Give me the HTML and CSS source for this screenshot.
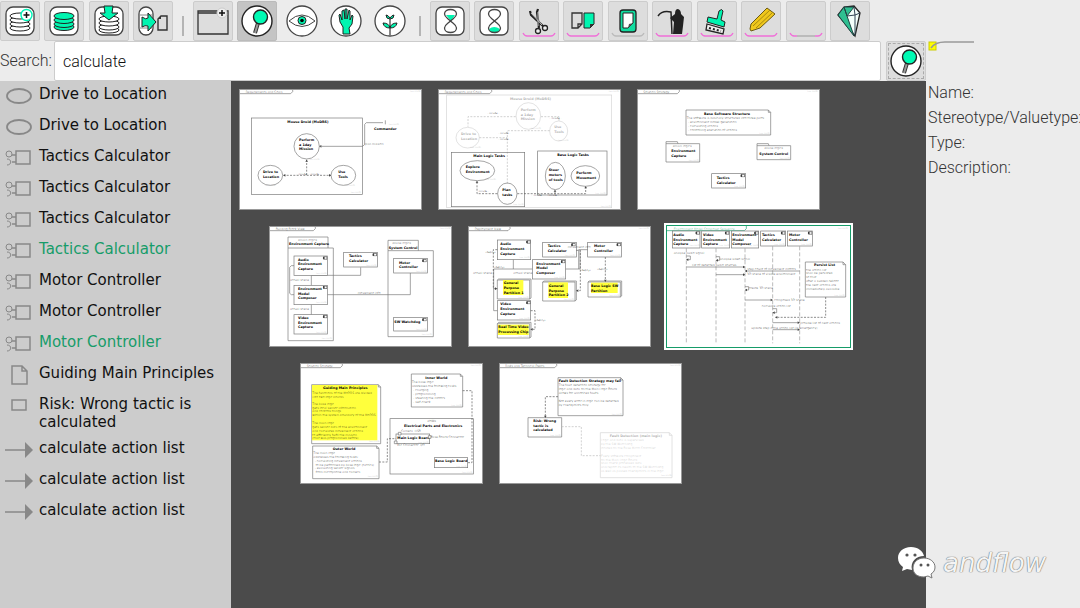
FILE: index.html
```
<!DOCTYPE html>
<html lang="en">
<head>
    <meta charset="UTF-8">
    <meta name="viewport" content="width=device-width, initial-scale=1.0">
    <title>Model Search</title>
    <link rel="stylesheet" href="styles.css">
</head>
<body>
    <!-- shared shapes -->
    <svg class="defs" aria-hidden="true">
        <symbol id="magnifier" viewBox="0 0 40 40">
            <circle cx="20" cy="20" r="15" fill="#fff" stroke="#222" stroke-width="1.4"/>
            <path d="M21 22L18 32" stroke="#333" stroke-width="4"/>
            <path d="M21 22L18 32" stroke="#999" stroke-width="2"/>
            <circle cx="23.500" cy="16" r="7" fill="#00fab4" stroke="#222" stroke-width="1.4"/>
        </symbol>
        <symbol id="component" viewBox="0 0 31 20">
            <path d="M14 3h14v13H14zM14 7h-4M14 14h-4" fill="none" stroke="#888" stroke-width="1.5"/>
            <circle cx="7" cy="6" r="3" fill="none" stroke="#888"/>
            <path d="M5 11c5 0 5 6 0 6" fill="none" stroke="#888"/>
        </symbol>
        <symbol id="usecase" viewBox="0 0 31 20">
            <ellipse cx="17" cy="10" rx="12" ry="7" fill="none" stroke="#888" stroke-width="1.8"/>
        </symbol>
        <symbol id="arrow" viewBox="0 0 31 20">
            <path d="M3 10h21" stroke="#888" stroke-width="1.5"/>
            <path d="M23 2l8 8-8 8z" fill="#888"/>
        </symbol>
        <symbol id="comp" viewBox="0 0 14 10">
            <path d="M3 1h10v8H3zM1 3h4v1H1zM1 6h4v1H1z" fill="#fff" stroke="#333"/>
        </symbol>
        <symbol id="underline" viewBox="0 0 40 40">
            <path d="M4 32c1 2 2 3 4 3h24c2 0 3-1 4-3" fill="none" stroke="currentColor" stroke-width="1.3"/>
        </symbol>
    </svg>

    <header class="toolbar">
        <div class="group group-data">
            <button class="tool" aria-label="New database">
                <svg viewBox="0 0 40 40"><rect class="tile" x="6" y="6" width="28" height="28" rx="7"/>
                    <g class="disc"><ellipse cx="20" cy="27" rx="10" ry="3"/><ellipse cx="20" cy="23" rx="10" ry="3"/><ellipse cx="20" cy="19" rx="10" ry="3"/><ellipse cx="20" cy="15" rx="10" ry="3"/></g>
                    <circle cx="26.500" cy="14" r="5.500" fill="#fff" stroke="#00f5b8" stroke-width="1.4"/><path class="plus" d="M23.500 14h6M26.500 11v6"/></svg>
            </button>
            <button class="tool" aria-label="Open database">
                <svg viewBox="0 0 40 40"><rect class="tile" x="6" y="6" width="28" height="28" rx="7"/>
                    <g class="disc green"><ellipse cx="20" cy="26" rx="10" ry="3.500"/><ellipse cx="20" cy="23" rx="10" ry="3.500"/><ellipse cx="20" cy="19" rx="10" ry="3.500"/><ellipse cx="20" cy="15" rx="10" ry="3.500"/></g></svg>
            </button>
            <button class="tool" aria-label="Save to database">
                <svg viewBox="0 0 40 40"><rect class="tile" x="6" y="6" width="28" height="28" rx="7"/>
                    <g class="disc"><ellipse cx="20" cy="29" rx="10" ry="3"/><ellipse cx="20" cy="26" rx="10" ry="3"/><ellipse cx="20" cy="22" rx="10" ry="3"/><ellipse cx="20" cy="18" rx="10" ry="3"/></g>
                    <path class="green" d="M15 5h9l-1 7h6l-9 7-9-7h5z"/></svg>
            </button>
            <button class="tool" aria-label="Export to file">
                <svg viewBox="0 0 40 40"><rect class="tile" x="6" y="6" width="14" height="28" rx="7"/>
                    <path d="M6 14h14M6 27h14" stroke="#888"/>
                    <path class="green" d="M9 16q4 3 6 1v-5l8 9-8 9v-5q-3-1-6 1z"/>
                    <path d="M28 15h6v14h-9V18z" fill="#ddd" stroke="#333" stroke-width="1.400"/><path d="M25 18l3-3v3z" fill="#333"/></svg>
            </button>
        </div>
        <span class="separator"></span>
        <div class="group group-view">
            <button class="tool" aria-label="New diagram">
                <svg viewBox="0 0 40 40"><path d="M5 10h30v23H5zM5 12h30" fill="none" stroke="#333" stroke-width="1.300"/><circle cx="29" cy="12" r="5" fill="#eee" stroke="#ccc"/><path class="plus" d="M26 12h6M29 9v6"/></svg>
            </button>
            <button class="tool active" aria-label="Find"><svg><use href="#magnifier"/></svg></button>
            <button class="tool flat" aria-label="Show">
                <svg viewBox="0 0 40 40"><circle class="round" cx="20" cy="20" r="15"/><path d="M7 20q13-12 26 0-13 11-26 0z" fill="#fff" stroke="#444"/><circle class="green" cx="20" cy="19.500" r="4"/><circle cx="20" cy="19.500" r="1.800"/></svg>
            </button>
            <button class="tool flat" aria-label="Move">
                <svg viewBox="0 0 40 40"><circle class="round" cx="20" cy="20" r="15"/><path class="green" d="M17 33v-7l-3-5-1-7 1-1 2 6v-9l2-1 1 9V8h2v10l2-9 1 1v9l2-5 1 1-1 8-3 4 1 6z"/></svg>
            </button>
            <button class="tool flat" aria-label="Grow">
                <svg viewBox="0 0 40 40"><circle class="round" cx="20" cy="20" r="15"/><path d="M20 18v16" stroke="#444" stroke-width="1.300"/><path class="green" d="M20 27q-6 0-7-5 6 0 7 5zM20 27q6 0 7-5-6 0-7 5zM20 18q-4 0-4-4 2 0 4 3 2-3 4-3 0 4-4 4z"/></svg>
            </button>
        </div>
        <span class="separator"></span>
        <div class="group group-edit">
            <button class="tool" aria-label="Undo">
                <svg viewBox="0 0 40 40"><rect class="tile" x="6" y="6" width="28" height="28" rx="6"/><path d="M16 14h9l-4 6z" fill="#00f5b0"/><path class="glass" d="M20.500 20c-3-3-6-4-6-7 0-6 12-6 12 0 0 3-3 4-6 7zM20.500 20c-3 3-6 4-6 7 0 6 12 6 12 0 0-3-3-4-6-7z"/></svg>
            </button>
            <button class="tool" aria-label="Redo">
                <svg viewBox="0 0 40 40"><rect class="tile" x="6" y="6" width="28" height="28" rx="6"/><path d="M15 28q5-4 11 0-2 5-6 4-4 0-5-4z" fill="#00f5b0"/><path class="glass" d="M20.500 20c-3-3-6-4-6-7 0-6 12-6 12 0 0 3-3 4-6 7zM20.500 20c-3 3-6 4-6 7 0 6 12 6 12 0 0-3-3-4-6-7z"/></svg>
            </button>
            <button class="tool" aria-label="Cut">
                <svg viewBox="0 0 40 40"><use class="pink" href="#underline"/><path d="M11 10l1 4 12 11M19 8l-1 3 2 16" fill="none" stroke="#222" stroke-width="2.200"/><path d="M12 12l11 12M19 11v14" stroke="#bbb"/><circle class="ring" cx="19" cy="30" r="2.500"/><circle class="ring" cx="26" cy="27" r="2.500"/></svg>
            </button>
            <button class="tool" aria-label="Copy">
                <svg viewBox="0 0 40 40"><use class="pink" href="#underline"/><path d="M9 12h10v11l-4 4H9zM15 27v-4h4" fill="#ddd" stroke="#333" stroke-width="1.300"/><path class="green" d="M21 12h10v11l-4 4h-6z"/><path d="M27 27v-4h4z" fill="#333"/></svg>
            </button>
            <button class="tool" aria-label="Paste">
                <svg viewBox="0 0 40 40"><use class="gray" href="#underline"/><rect x="12" y="9" width="16" height="22" rx="3" fill="#12dda0" stroke="#222" stroke-width="1.300"/><path d="M15 12h10v10l-5 5h-5z" fill="#fff" stroke="#222"/><path d="M20 27l1-4 4-1z" fill="#555"/></svg>
            </button>
            <button class="tool" aria-label="Delete">
                <svg viewBox="0 0 40 40"><use class="pink" href="#underline"/><path d="M6 15q4-6 13-4l1 22" fill="none" stroke="#222" stroke-width="1.500"/><path d="M18 17l5-4q0-5 3-5 3 1 3 5l3 3-1 9-1 8H21l1-12z" fill="#222"/></svg>
            </button>
            <button class="tool" aria-label="Format">
                <svg viewBox="0 0 40 40"><use class="pink" href="#underline"/><path class="green" d="M11 16l9 2 2-8q3-3 4 0l-2 9 4 2-1 5-17-5z"/><path d="M10 23l17 5-1 5-17-4z" fill="#eee" stroke="#222" stroke-width="1.300"/><path d="M12 27l12 3" stroke="#222" stroke-width="2" stroke-dasharray="2 2"/></svg>
            </button>
            <button class="tool" aria-label="Highlight">
                <svg viewBox="0 0 40 40"><use class="pink" href="#underline"/><path d="M10 23L26 7l8 6-15 14-6 2-3 1-1-2z" fill="#f0c71c" stroke="#6b5a14"/><path d="M12 25L29 9M15 27L32 11" stroke="#a68a10"/></svg>
            </button>
            <button class="tool" aria-label="Clear highlight"><svg viewBox="0 0 40 40"><use class="pink" href="#underline"/><path d="M11 35h18" stroke="#bbb" stroke-width="2"/></svg></button>
            <button class="tool" aria-label="Refine">
                <svg viewBox="0 0 40 40"><path d="M8 14l6-8 10-1 6 7-5 23z" fill="#f4fffb" stroke="#222" stroke-width="1.300"/><path d="M8 14l6-8 3 9 7 20zM14 6l10 0-7 9z" fill="#2fbf91" stroke="#244"/><path d="M17 15l8-1 5-2M25 14v20M24 6l1 8" fill="none" stroke="#345"/></svg>
            </button>
        </div>
    </header>

    <div class="workspace">
        <main class="main">
            <form class="search">
                <label for="query">Search:</label>
                <input id="query" type="text" value="calculate">
                <button class="tool" type="button" aria-label="Search"><svg><use href="#magnifier"/></svg></button>
            </form>

            <div class="content">
                <ul class="results">
                    <li><svg><use href="#usecase"/></svg><a href="#d1">Drive to Location</a></li>
                    <li><svg><use href="#usecase"/></svg><a href="#d2">Drive to Location</a></li>
                    <li><svg><use href="#component"/></svg><a href="#d3">Tactics Calculator</a></li>
                    <li><svg><use href="#component"/></svg><a href="#d4">Tactics Calculator</a></li>
                    <li><svg><use href="#component"/></svg><a href="#d5">Tactics Calculator</a></li>
                    <li><svg><use href="#component"/></svg><a class="current" href="#d6">Tactics Calculator</a></li>
                    <li><svg><use href="#component"/></svg><a href="#d4">Motor Controller</a></li>
                    <li><svg><use href="#component"/></svg><a href="#d5">Motor Controller</a></li>
                    <li><svg><use href="#component"/></svg><a class="current" href="#d6">Motor Controller</a></li>
                    <li><svg viewBox="0 0 31 20"><path d="M10 1h10l5 5v13H10zM20 1v5h5" fill="none" stroke="#888" stroke-width="1.500"/></svg><a href="#d7">Guiding Main Principles</a></li>
                    <li><svg viewBox="0 0 31 20"><path d="M10 4h14v10H10z" fill="none" stroke="#888" stroke-width="1.500"/></svg><a href="#d8">Risk: Wrong tactic is calculated</a></li>
                    <li><svg><use href="#arrow"/></svg><a href="#d6">calculate action list</a></li>
                    <li><svg><use href="#arrow"/></svg><a href="#d6">calculate action list</a></li>
                    <li><svg><use href="#arrow"/></svg><a href="#d6">calculate action list</a></li>
                </ul>

                <!-- diagram overview, three drawing units to a pixel -->
                <div class="canvas">
                    <div class="row">
                        <svg class="diagram" id="d1" viewBox="15 14 549 363">
                            <path class="tab" d="M15 28h155l6-6v-8"/><text class="title" x="35" y="25">Requirements and Goals</text>
                            <rect x="52" y="101" width="333" height="229"/>
                            <text class="name" x="160" y="115">Mouse Droid (MoDRS)</text>
                            <circle cx="218" cy="186" r="38"/>
                            <text class="name"><tspan x="195" y="170">Perform</tspan><tspan x="195" dy="14">a 1day</tspan><tspan x="195" dy="14">Mission</tspan></text>
                            <ellipse cx="109" cy="273" rx="37" ry="30"/>
                            <text class="name"><tspan x="87" y="266">Drive to</tspan><tspan x="87" dy="14">Location</tspan></text>
                            <ellipse cx="328" cy="273" rx="37" ry="30"/>
                            <text class="name"><tspan x="313" y="266">Use</tspan><tspan x="313" dy="14">Tools</tspan></text>
                            <path class="dash" d="M218 226v47M148 273h143"/><path class="head" d="M148 273l6-4v8zM291 273l-6-4v8zM256 186l6-4v8zM218 226l-4 6h8z"/>
                            <text class="tiny" x="187" y="271">&lt;include&gt;&lt;include&gt;</text>
                            <path d="M256 186h130l6-6v-60l5-5h50"/><path d="M454 108v12"/>
                            <text class="name" x="420" y="136">Commander</text><text class="note" x="392" y="182">plan mission</text>
                            <g class="rev"><text x="528" y="22">(rev 0003)</text><text x="464" y="121">(rev 0003)</text><text x="225" y="226">(rev 0003)</text><text x="93" y="304">(rev 0003)</text><text x="332" y="304">(rev 0003)</text><text x="350" y="327">(rev 0003)</text></g>
                        </svg>
                        <svg class="diagram" id="d2" viewBox="18 14 549 363">
                            <path class="tab" d="M18 28h155l6-6v-8"/><text class="title" x="38" y="25">Requirements and Goals</text>
                            <g class="faded">
                                <rect x="44" y="32" width="495" height="338"/>
                                <text class="name" x="234" y="46">Mouse Droid (MoDRS)</text>
                                <ellipse cx="289" cy="95" rx="37" ry="40"/>
                                <text class="name"><tspan x="266" y="80">Perform</tspan><tspan x="266" dy="14">a 1day</tspan><tspan x="266" dy="14">Mission</tspan></text>
                                <ellipse cx="107" cy="160" rx="35" ry="31"/>
                                <text class="name"><tspan x="87" y="152">Drive to</tspan><tspan x="87" dy="14">Location</tspan></text>
                                <ellipse cx="380" cy="140" rx="27" ry="30"/>
                                <text class="name"><tspan x="367" y="132">Use</tspan><tspan x="367" dy="14">Tools</tspan></text>
                            </g>
                            <path class="dash light" d="M251 97H108v30M327 97h54v12M353 139H226v160M142 160h84"/>
                            <rect x="58" y="204" width="220" height="163"/><text class="name" x="124" y="217">Main Logic Tasks</text>
                            <rect x="317" y="200" width="208" height="132"/><text class="name" x="376" y="214">Base Logic Tasks</text>
                            <ellipse cx="136" cy="259" rx="52" ry="30"/>
                            <text class="name"><tspan x="101" y="251">Explore</tspan><tspan x="101" dy="14">Environment</tspan></text>
                            <ellipse cx="226" cy="328" rx="29" ry="32"/>
                            <text class="name"><tspan x="211" y="321">Plan</tspan><tspan x="211" dy="14">tasks</tspan></text>
                            <ellipse cx="370" cy="275" rx="30" ry="41"/>
                            <text class="name"><tspan x="350" y="261">Steer</tspan><tspan x="350" dy="14">motors</tspan><tspan x="350" dy="14">of tools</tspan></text>
                            <ellipse cx="460" cy="275" rx="43" ry="31"/>
                            <text class="name"><tspan x="433" y="269">Perform</tspan><tspan x="433" dy="14">Movement</tspan></text>
                            <path class="dash" d="M196 328h-61v-38M256 328h205v-22M369 328v-10"/><path class="head" d="M135 289l-4 6h8zM461 306l-4 6h8zM369 316l-4 6h8z"/>
                            <g class="tiny"><text x="134" y="324">&lt;include&gt;</text><text x="298" y="336">&lt;include&gt;</text><text x="344" y="336">&lt;include&gt;</text><text x="198" y="148">&lt;include&gt;</text><text x="198" y="168">&lt;include&gt;</text><text x="165" y="90">&lt;include&gt;</text><text x="352" y="104">&lt;include&gt;</text></g>
                            <g class="rev"><text x="530" y="22">(rev 0003)</text><text x="115" y="190">(rev 0003)</text><text x="296" y="135">(rev 0003)</text><text x="378" y="169">(rev 0003)</text><text x="160" y="288">(rev 0003)</text><text x="244" y="361">(rev 0003)</text><text x="490" y="329">(rev 0003)</text><text x="506" y="367">(rev 0003)</text></g>
                        </svg>
                        <svg class="diagram" id="d3" viewBox="20 14 549 363">
                            <path class="tab" d="M20 28h121l6-6v-8"/><text class="title" x="39" y="25">Solution Strategy</text>
                            <path d="M167 77h247l7 7v68H167zM414 77v7h7"/>
                            <text class="name" x="221" y="92">Base Software Structure</text>
                            <text class="note"><tspan x="169" y="104">The software is basically structured into three parts:</tspan><tspan x="173" dy="12">- environment model generation</tspan><tspan x="173" dy="11">- calculating actions</tspan><tspan x="173" dy="12">- controlling execution of actions</tspan></text>
                            <path d="M107 178v-6h34l2 6M107 178h101v55H107zM380 184v-6h34l2 6M380 184h101v42H380z"/>
                            <text class="stereo" x="127" y="188">«main logic»</text><text class="name"><tspan x="123" y="203">Environment</tspan><tspan x="123" dy="14">Capture</tspan></text>
                            <text class="stereo" x="402" y="195">«base logic»</text><text class="name" x="387" y="211">System Control</text>
                            <rect x="244" y="268" width="102" height="43"/><use href="#comp" x="330" y="269" width="14" height="10"/>
                            <text class="name"><tspan x="259" y="284">Tactics</tspan><tspan x="259" dy="14">Calculator</tspan></text>
                            <g class="rev"><text x="531" y="22">(rev 0003)</text><text x="387" y="148">(rev 0003)</text><text x="175" y="229">(rev 0003)</text><text x="448" y="223">(rev 0003)</text><text x="312" y="307">(rev 0003)</text></g>
                        </svg>
                    </div>

                    <div class="row indent">
                        <svg class="diagram" id="d4" viewBox="15 17 549 363">
                            <path class="tab" d="M15 31h133l6-6v-8"/><text class="title" x="35" y="29">Building Block View</text>
                            <path d="M72 83V50h120v33M72 83h136v278H72zM372 91V60h91v31M372 91h136v258H372z"/>
                            <text class="stereo" x="102" y="61">«main logic»</text><text class="name" x="75" y="75">Environment Capture</text>
                            <text class="stereo" x="385" y="72">«base logic»</text><text class="name" x="374" y="87">System Control</text>
                            <path d="M90 136h-8l-5 5v78l5 4h8M142 165v30M142 165h148v-24M142 253v30M190 223h249v-65"/>
                            <g class="node"><rect x="90" y="107" width="100" height="58"/><rect x="90" y="195" width="100" height="58"/><rect x="90" y="283" width="100" height="58"/><rect x="239" y="97" width="101" height="43"/><rect x="389" y="114" width="101" height="44"/><rect x="389" y="291" width="101" height="41"/></g>
                            <text class="name"><tspan x="102" y="121">Audio</tspan><tspan x="102" dy="14">Environment</tspan><tspan x="102" dy="14">Capture</tspan></text>
                            <text class="name"><tspan x="102" y="209">Environment</tspan><tspan x="102" dy="14">Model</tspan><tspan x="102" dy="14">Composer</tspan></text>
                            <text class="name"><tspan x="102" y="296">Video</tspan><tspan x="102" dy="14">Environment</tspan><tspan x="102" dy="14">Capture</tspan></text>
                            <text class="name"><tspan x="255" y="111">Tactics</tspan><tspan x="255" dy="14">Calculator</tspan></text>
                            <text class="name"><tspan x="405" y="130">Motor</tspan><tspan x="405" dy="14">Controller</tspan></text>
                            <text class="name" x="391" y="307">SW Watchdog</text>
                            <use href="#comp" x="176" y="108" width="14" height="10"/><use href="#comp" x="176" y="196" width="14" height="10"/><use href="#comp" x="176" y="284" width="14" height="10"/><use href="#comp" x="325" y="98" width="14" height="10"/><use href="#comp" x="474" y="116" width="14" height="10"/><use href="#comp" x="474" y="293" width="14" height="10"/>
                            <text class="note" x="78" y="183">actual scene</text><text class="note" x="78" y="270">actual scene</text><text class="note" x="281" y="220">movement info</text>
                            <g class="rev"><text x="528" y="25">(rev 0003)</text><text x="156" y="161">(rev 0003)</text><text x="156" y="249">(rev 0003)</text><text x="156" y="337">(rev 0003)</text><text x="173" y="357">(rev 0003)</text><text x="306" y="136">(rev 0003)</text><text x="456" y="154">(rev 0003)</text><text x="456" y="328">(rev 0003)</text><text x="473" y="345">(rev 0003)</text></g>
                        </svg>
                        <svg class="diagram" id="d5" viewBox="18 17 549 363">
                            <path class="tab" d="M18 31h120l6-6v-8"/><text class="title" x="38" y="29">Deployment View</text>
                            <g class="node"><rect x="106" y="59" width="100" height="59"/><rect x="242" y="67" width="101" height="43"/><rect x="377" y="67" width="101" height="43"/><rect x="106" y="241" width="100" height="58"/></g>
                            <path d="M154 118v28M95 146h260M95 146v125h11M350 146V88h27M354 146V90"/>
                            <g class="node"><rect x="211" y="118" width="100" height="58"/>
                                <path d="M106 179l4-3h97v57l-4 3h-97zM106 179h97v57M242 185l4-3h97v57l-4 3h-97zM242 185h97v57M378 185l4-3h97v45l-4 3h-97zM378 185h97v45M106 310l4-4h97v44l-4 3h-97zM106 310h97v43"/></g>
                            <g class="mark"><rect x="123" y="179" width="61" height="45"/><rect x="259" y="186" width="59" height="47"/><rect x="387" y="187" width="80" height="31"/><rect x="108" y="313" width="92" height="31"/></g>
                            <text class="name"><tspan x="115" y="75">Audio</tspan><tspan x="115" dy="14">Environment</tspan><tspan x="115" dy="14">Capture</tspan></text>
                            <text class="name"><tspan x="257" y="81">Tactics</tspan><tspan x="257" dy="14">Calculator</tspan></text>
                            <text class="name"><tspan x="396" y="81">Motor</tspan><tspan x="396" dy="14">Controller</tspan></text>
                            <text class="name"><tspan x="223" y="133">Environment</tspan><tspan x="223" dy="14">Model</tspan><tspan x="223" dy="14">Composer</tspan></text>
                            <text class="name"><tspan x="125" y="191">General</tspan><tspan x="125" dy="14">Purpose</tspan><tspan x="125" dy="15">Partition 1</tspan></text>
                            <text class="name"><tspan x="260" y="199">General</tspan><tspan x="260" dy="15">Purpose</tspan><tspan x="260" dy="14">Partition 2</tspan></text>
                            <text class="name"><tspan x="387" y="199">Base Logic SW</tspan><tspan x="387" dy="15">Partition</tspan></text>
                            <text class="name"><tspan x="115" y="255">Video</tspan><tspan x="115" dy="14">Environment</tspan><tspan x="115" dy="15">Capture</tspan></text>
                            <text class="name"><tspan x="109" y="324">Real Time Video</tspan><tspan x="109" dy="15">Processing Chip</tspan></text>
                            <path class="dash" d="M106 88H94v117h12M343 90h12v121h-12M430 110v74M206 271h13v56h-13"/><path class="head" d="M106 205l-7-4v8zM343 211l6-4v8zM430 184l-4-6h8zM206 327l6-4v8z"/>
                            <use href="#comp" x="192" y="60" width="14" height="10"/><use href="#comp" x="327" y="68" width="14" height="10"/><use href="#comp" x="463" y="68" width="14" height="10"/><use href="#comp" x="296" y="119" width="14" height="10"/><use href="#comp" x="192" y="242" width="14" height="10"/>
                            <text class="note" x="33" y="160">actual scene</text><text class="note" x="154" y="160">actual scene</text><text class="note" x="317" y="82">movement info</text>
                            <g class="tiny"><text x="70" y="97">«deploy»</text><text x="96" y="142">«deploy»</text><text x="355" y="151">«deploy»</text><text x="405" y="149">«deploy»</text><text x="219" y="301">«deploy»</text></g>
                            <g class="rev"><text x="530" y="25">(rev 0003)</text><text x="172" y="114">(rev 0003)</text><text x="308" y="106">(rev 0003)</text><text x="444" y="106">(rev 0003)</text><text x="277" y="172">(rev 0003)</text><text x="169" y="232">(rev 0003)</text><text x="305" y="239">(rev 0003)</text><text x="441" y="227">(rev 0003)</text><text x="172" y="295">(rev 0003)</text><text x="169" y="350">(rev 0003)</text></g>
                        </svg>
                        <svg class="diagram selected" id="d6" viewBox="18 17 549 363">
                            <path class="tab teal" d="M18 31h232l6-6v-8"/><text class="title teal" x="38" y="29">Environment Model Composer Sequence</text>
                            <path class="life" d="M76 84v285M165 84v285M252 84v285M335 78v291M416 78v291"/>
                            <g class="node"><rect x="34" y="32" width="83" height="51"/><rect x="122" y="32" width="84" height="51"/><rect x="211" y="32" width="82" height="51"/><rect x="299" y="32" width="75" height="45"/><rect x="379" y="32" width="75" height="45"/></g>
                            <text class="name"><tspan x="37" y="47">Audio</tspan><tspan x="37" dy="14">Environment</tspan><tspan x="37" dy="14">Capture</tspan></text>
                            <text class="name"><tspan x="126" y="47">Video</tspan><tspan x="126" dy="14">Environment</tspan><tspan x="126" dy="14">Capture</tspan></text>
                            <text class="name"><tspan x="214" y="47">Environment</tspan><tspan x="214" dy="14">Model</tspan><tspan x="214" dy="14">Composer</tspan></text>
                            <text class="name"><tspan x="303" y="47">Tactics</tspan><tspan x="303" dy="14">Calculator</tspan></text>
                            <text class="name"><tspan x="384" y="47">Motor</tspan><tspan x="384" dy="14">Controller</tspan></text>
                            <use href="#comp" x="103" y="33" width="14" height="10"/><use href="#comp" x="191" y="33" width="14" height="10"/><use href="#comp" x="279" y="33" width="14" height="10"/><use href="#comp" x="359" y="33" width="14" height="10"/><use href="#comp" x="440" y="33" width="14" height="10"/>
                            <path d="M76 140h176M252 152h164M165 163h87M252 239h83M335 307h81M335 328h81M76 107h12v11H76M165 109h11v11h-11M252 199h11v10h-11M335 265h12v12h-12"/>
                            <path class="head" d="M252 140l-6-4v8zM252 152l6-4v8zM252 163l-6-4v8zM335 239l-6-4v8zM416 307l-6-4v8zM416 328l-6-4v8zM76 118l6-4v8zM165 120l6-4v8zM252 209l6-4v8zM335 277l6-4v8z"/>
                            <g class="note"><text x="38" y="102">analyse audio signal</text><text x="176" y="119">analyse video signal</text><text x="93" y="137">list of detected audio sources</text><text x="259" y="148">step count of movement motors</text><text x="258" y="165">3D scene of visible environment</text><text x="263" y="206">create 3D scene</text><text x="340" y="243">composed 3D scene</text><text x="302" y="261">calculate action list</text><text x="418" y="312">provide list of next actions</text><text x="271" y="325">update step if the action list (in emergency)</text></g>
                            <path class="node" d="M433 125h113l8 8v97H433zM546 125v8h8"/><path class="dash" d="M494 230v61H343"/><path class="head" d="M343 291l6-4v8z"/>
                            <text class="name" x="459" y="138">Persist List</text>
                            <text class="note"><tspan x="435" y="151">the action list</tspan><tspan x="435" dy="11">shall be persisted,</tspan><tspan x="435" dy="11">so that</tspan><tspan x="435" dy="11">after a sudden reboot</tspan><tspan x="435" dy="12">the next actions are</tspan><tspan x="435" dy="12">immediately available.</tspan></text>
                            <g class="rev"><text x="530" y="25">(rev 0003)</text><text x="86" y="76">(rev 0003)</text><text x="175" y="76">(rev 0003)</text><text x="262" y="76">(rev 0003)</text><text x="340" y="73">(rev 0003)</text><text x="421" y="73">(rev 0003)</text><text x="520" y="226">(rev 0003)</text></g>
                        </svg>
                    </div>

                    <div class="row indent-more">
                        <svg class="diagram" id="d7" viewBox="18 14 549 363">
                            <path class="tab" d="M18 28h121l6-6v-8"/><text class="title" x="38" y="25">Solution Strategy</text>
                            <path class="node" d="M53 79h200l7 7v170H53zM253 79v7h7"/><rect class="mark" x="54" y="80" width="196" height="166"/>
                            <text class="name" x="87" y="92">Guiding Main Principles</text>
                            <text class="note"><tspan x="55" y="107">The functions of the MoDRS are divided</tspan><tspan x="55" dy="12">into two logic boards.</tspan><tspan x="55" dy="20">The base logic</tspan><tspan x="55" dy="12">gets local sensor information</tspan><tspan x="55" dy="11">and controls things</tspan><tspan x="55" dy="12">within the system boundary of the MoDRS.</tspan><tspan x="55" dy="22">The main logic</tspan><tspan x="55" dy="12">gets sensor data of the environment</tspan><tspan x="55" dy="12">and calculates movement actions</tspan><tspan x="55" dy="12">to efficiently fulfil the mission</tspan><tspan x="55" dy="11">(that was programmed before).</tspan></text>
                            <path d="M352 47h147l7 7v92H352zM499 47v7h7M56 263h192l7 7v91H56zM248 263v7h7"/>
                            <text class="name" x="394" y="63">Inner World</text>
                            <text class="note"><tspan x="354" y="75">The base logic</tspan><tspan x="354" dy="12">addresses the following tasks:</tspan><tspan x="358" dy="11">- charging</tspan><tspan x="358" dy="12">- programming</tspan><tspan x="358" dy="11">- steering the motors</tspan><tspan x="358" dy="12">- self-check</tspan></text>
                            <text class="name" x="116" y="275">Outer World</text>
                            <text class="note"><tspan x="58" y="287">The main logic</tspan><tspan x="58" dy="12">addresses the following tasks:</tspan><tspan x="62" dy="11">- calculating movement actions</tspan><tspan x="65" dy="12">to be performed by base logic (tactics)</tspan><tspan x="62" dy="11">- evaluating sensor signals</tspan><tspan x="65" dy="12">from microphone and camera</tspan></text>
                            <rect x="288" y="181" width="250" height="166"/><text class="stereo" x="400" y="191">«HW»</text><text class="name" x="330" y="206">Electrical Parts and Electronics</text>
                            <rect x="306" y="227" width="101" height="29"/><text class="name" x="310" y="243">Main Logic Board</text>
                            <rect x="421" y="298" width="100" height="30"/><text class="name" x="423" y="312">Base Logic Board</text>
                            <path class="node" d="M313 222h8v8h-8zM301 248h8v8h-8zM403 232h8v8h-8z"/>
                            <g class="note"><text x="321" y="222">Camera :USB</text><text x="410" y="240">Base Board Connector</text><text x="309" y="263">Mic Connector :I/O</text></g>
                            <path class="dash" d="M255 311h25v-70h26M506 97h28v216h-13"/>
                            <g class="rev"><text x="530" y="22">(rev 0003)</text><text x="225" y="252">(rev 0003)</text><text x="472" y="142">(rev 0003)</text><text x="221" y="357">(rev 0003)</text><text x="373" y="254">(rev 0003)</text><text x="487" y="325">(rev 0003)</text><text x="504" y="344">(rev 0003)</text></g>
                        </svg>
                        <svg class="diagram" id="d8" viewBox="614 14 549 363">
                            <path class="tab" d="M614 28h167l6-6v-8"/><text class="title" x="633" y="25">Risks and Technical Debts</text>
                            <path d="M791 58h188l7 7v107H791zM979 58v7h7M701 178h101v58H701z"/>
                            <text class="name" x="793" y="72">Fault Detection Strategy may fail</text>
                            <text class="note"><tspan x="793" y="84">The fault detection strategy for</tspan><tspan x="793" dy="11">logic and data on the Main Logic Board</tspan><tspan x="793" dy="12">allows for unnoticed faults:</tspan><tspan x="793" dy="23">Not every error in logic can be detected</tspan><tspan x="793" dy="12">by checkpoints only.</tspan></text>
                            <text class="name"><tspan x="717" y="191">Risk: Wrong</tspan><tspan x="717" dy="14">tactic is</tspan><tspan x="717" dy="14">calculated</tspan></text>
                            <path class="dash" d="M791 115h-38v63"/><path class="head" d="M753 178l-4-6h8z"/><path class="dash light" d="M802 205h59v87h57"/>
                            <g class="faded">
                                <path d="M918 223h207l8 8v127H918zM1125 223v8h8"/><text class="name" x="946" y="237">Fault Detection (main logic)</text>
                                <text class="note"><tspan x="920" y="249">Logic and data is supervised</tspan><tspan x="920" dy="12">by the SW Watchdog</tspan><tspan x="920" dy="11">located on the Base Micro Controller.</tspan><tspan x="920" dy="23">Every software component</tspan><tspan x="920" dy="12">on the Main Logic Board</tspan><tspan x="920" dy="11">shall check processed data</tspan><tspan x="920" dy="12">and report its health to the SW Watchdog</tspan><tspan x="920" dy="11">as well as passed checkpoints in the logic.</tspan></text>
                            </g>
                            <g class="rev"><text x="1127" y="22">(rev 0003)</text><text x="952" y="169">(rev 0003)</text><text x="768" y="232">(rev 0003)</text><text x="1100" y="354">(rev 0003)</text></g>
                        </svg>
                    </div>
                </div>
            </div>
        </main>

        <aside class="details">
            <svg class="marker" viewBox="0 0 48 12"><rect x="3" y="1" width="7" height="8" fill="#ff0" stroke="#cc0"/><path d="M5 7q4-6 14-6h29" fill="none" stroke="#999" stroke-width="1.500"/></svg>
            <dl>
                <dt>Name:</dt>
                <dt>Stereotype/Valuetype:</dt>
                <dt>Type:</dt>
                <dt>Description:</dt>
            </dl>
        </aside>
    </div>

    <div class="brand">
        <svg viewBox="0 0 40 34"><path d="M14 1C6 1 1 6 1 12c0 4 2 7 5 9l-1 4 5-2 5 1c-2-8 4-14 12-14C26 5 21 1 14 1z" fill="#fff"/><path d="M27 12c-6 0-11 4-11 10s5 9 11 9l4-1 4 2-1-4c3-2 4-4 4-7 0-5-5-9-11-9z" fill="#fff" stroke="#777"/><g fill="#555"><circle cx="10" cy="9" r="1.600"/><circle cx="18" cy="9" r="1.600"/><circle cx="24" cy="19" r="1.500"/><circle cx="31" cy="19" r="1.500"/></g></svg>
        <span>andflow</span>
    </div>
</body>
</html>
```
FILE: styles.css
```
* {
    margin: 0;
    padding: 0;
    box-sizing: border-box;
}

body {
    height: 100vh;
    display: flex;
    flex-direction: column;
    overflow: hidden;
    background: #ececec;
    color: #333;
    font-family: Roboto, sans-serif;
    font-size: 16px;
    font-weight: 300;
}

.defs {
    position: absolute;
    width: 0;
    height: 0;
}

/* Toolbar */
.toolbar {
    display: flex;
    align-items: center;
    height: 41px;
    flex: none;
}

.group {
    display: flex;
    justify-content: space-between;
}

.group-data {
    width: 173px;
}

.group-view {
    width: 217px;
}

.group-edit {
    width: 440px;
}

.separator {
    width: 2px;
    height: 20px;
    margin: 10px 9px 0;
    background: #b4b4b4;
}

.tool {
    width: 40px;
    height: 40px;
    flex: none;
    border: 1px solid #ccc;
    border-radius: 2px;
    background: #ddd;
}

.tool svg {
    display: block;
    width: 40px;
    height: 40px;
    margin: -1px;
}

.tool.active {
    background: #c4c4c4;
    border-color: #bbb;
}

.tool.flat {
    background: none;
    border-color: transparent;
}

.tile {
    fill: #fff;
    stroke: #444;
    stroke-width: 1.3;
}

.round {
    fill: #fff;
    stroke: #444;
    stroke-width: 1.3;
}

.disc {
    fill: #fff;
    stroke: #222;
}

.green {
    fill: #00f5b0;
    stroke: #222;
}

.plus {
    stroke: #111;
    stroke-width: 1.5;
}

.glass {
    fill: none;
    stroke: #444;
    stroke-width: 1.3;
}

.ring {
    fill: #eee;
    stroke: #222;
    stroke-width: 1.3;
}

.pink {
    color: #f06fd8;
}

.gray {
    color: #bbb;
}

/* Main area */
.workspace {
    flex: 1;
    display: flex;
    min-height: 0;
}

.main {
    flex: 1;
    min-width: 0;
    display: flex;
    flex-direction: column;
}

.search {
    display: flex;
    height: 40px;
    flex: none;
}

.search label {
    width: 54px;
    line-height: 40px;
}

.search input {
    flex: 1;
    min-width: 0;
    margin-right: 5px;
    padding: 0 8px;
    border: 1px solid #ccc;
    border-radius: 2px;
    background: #fff;
    color: #111;
    font: 300 16px Roboto, sans-serif;
}

.search .tool {
    outline: 1px dashed #aaa;
    outline-offset: -3px;
}

.content {
    flex: 1;
    display: flex;
    min-height: 0;
}

/* Result list */
.results {
    width: 231px;
    flex: none;
    background: #ccc;
    list-style: none;
    font: 15px/18px "DejaVu Sans", sans-serif;
}

.results li {
    display: flex;
    gap: 6px;
    min-height: 31px;
    padding: 4px 8px 4px 2px;
}

.results svg {
    width: 31px;
    height: 20px;
    margin-top: 1px;
    flex: none;
}

.results a {
    color: #111;
    text-decoration: none;
}

.results .current {
    color: #169c69;
}

/* Diagram overview */
.canvas {
    flex: 1;
    min-width: 0;
    display: flex;
    flex-direction: column;
    gap: 16px;
    padding: 8px;
    background: #4b4b4b;
}

.row {
    display: flex;
    gap: 16px;
}

.indent {
    margin-left: 30px;
}

.indent-more {
    margin-left: 61px;
}

.diagram {
    width: 183px;
    height: 121px;
    flex: none;
    background: #fff;
    outline: 1px solid #999;
    outline-offset: -1px;
    fill: none;
    stroke: #777;
    stroke-width: 2;
    font-family: "DejaVu Sans", sans-serif;
}

.diagram.selected {
    outline: 1px solid #169c69;
    outline-offset: 0;
    box-shadow: 0 0 0 3px #fff;
}

.diagram text {
    stroke: none;
}

.diagram .name {
    fill: #000;
    font-size: 10px;
    font-weight: 700;
}

.diagram .note {
    fill: #000;
    font-size: 9px;
}

.diagram .title,
.diagram .stereo {
    fill: #222;
    font-size: 9px;
}

.diagram .tiny {
    fill: #000;
    font-size: 7px;
}

.diagram .rev {
    fill: #888;
    font-size: 6px;
}

.diagram .node {
    fill: #fff;
}

.diagram .mark {
    fill: #ffff3c;
    stroke: none;
}

.diagram .head {
    fill: #444;
    stroke: none;
}

.diagram .dash {
    stroke: #555;
    stroke-dasharray: 6 4;
}

.diagram .light {
    stroke: #bbb;
}

.diagram .life {
    stroke: #999;
    stroke-dasharray: 12 6;
}

.diagram .faded {
    opacity: 0.3;
}

.diagram path.teal {
    stroke: #169c69;
}

.diagram text.teal {
    fill: #169c69;
}

/* Details */
.details {
    width: 154px;
    flex: none;
}

.marker {
    display: block;
    width: 48px;
    height: 12px;
}

.details dl {
    margin-top: 27px;
    padding-left: 2px;
    line-height: 25px;
    white-space: nowrap;
}

/* Brand mark floating over the corner */
.brand {
    position: absolute;
    right: 34px;
    bottom: 28px;
    display: flex;
    align-items: center;
    gap: 6px;
    color: #f4f4f4;
    font: italic 26px "DejaVu Sans", sans-serif;
    text-shadow: 0 0 1px #666, 0 0 1px #666;
}

.brand svg {
    width: 40px;
    height: 34px;
}
```
